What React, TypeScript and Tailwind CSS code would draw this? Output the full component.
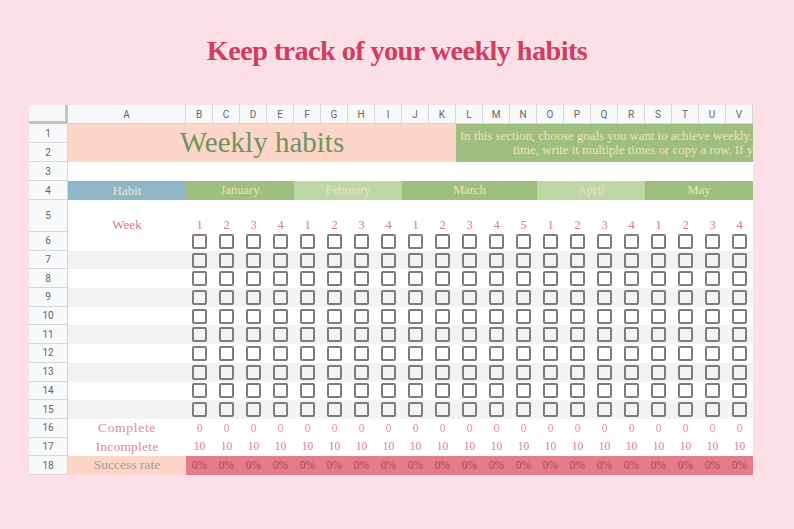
import React from "react";

/* ---------- Data ---------- */
const letters = "BCDEFGHIJKLMNOPQRSTUV".split("");

const months = [
  { name: "January", weeks: 4, dark: true },
  { name: "February", weeks: 4, dark: false },
  { name: "March", weeks: 5, dark: true },
  { name: "April", weeks: 4, dark: false },
  { name: "May", weeks: 4, dark: true },
];

const weekNums = months.flatMap((m) =>
  Array.from({ length: m.weeks }, (_, i) => i + 1)
);

const serif = "font-['Liberation_Serif','DejaVu_Serif',serif]";
const gutter =
  "flex items-center justify-center bg-[#f8f9fa] border-r border-b border-[#d4d6d9] text-[10px] text-[#666] font-['Roboto',sans-serif]";

function Gutter({ n }: { n: number }) {
  return <div className={gutter}>{n}</div>;
}

function Checkbox() {
  return (
    <div className="w-[15px] h-[15px] rounded-[2px] border-2 border-[#7c7c7c]" />
  );
}

export default function App() {
  return (
    <div className="w-[794px] h-[529px] bg-[#fde0e7] overflow-hidden flex flex-col">
      {/* Title */}
      <h1
        className={`self-center mt-[35px] h-[32px] leading-[32px] text-[28.3px] font-bold tracking-[-0.6px] text-[#d23c63] ${serif}`}
      >
        Keep track of your weekly habits
      </h1>

      {/* Sheet */}
      <div className="mt-[38px] ml-[29px] self-start grid grid-cols-[39px_118px_repeat(21,27px)] grid-rows-[19px_19px_19px_19px_19px_32px_repeat(13,18.7px)] bg-white">
        {/* Column headers */}
        <div className="bg-[#f8f9fa] border-r-[3px] border-b-[3px] border-[#c4c4c4]" />
        <div className="flex items-center justify-center bg-[#f8f9fa] border-r border-b border-[#d4d6d9] text-[10px] text-[#666] font-['Roboto',sans-serif]">
          A
        </div>
        {letters.map((l) => (
          <div
            key={l}
            className="flex items-center justify-center bg-[#f8f9fa] border-r border-b border-[#d4d6d9] text-[10px] text-[#666] font-['Roboto',sans-serif]"
          >
            {l}
          </div>
        ))}

        {/* Rows 1-2 */}
        <Gutter n={1} />
        <div
          className={`col-span-11 row-span-2 bg-[#fdd6c9] flex items-center justify-center text-[29px] text-[#6f9460] ${serif}`}
        >
          Weekly habits
        </div>
        <div
          className={`col-span-11 row-span-2 bg-[#9ebf7f] overflow-hidden whitespace-nowrap flex flex-col justify-center text-[12.8px] leading-[14px] text-[#f0e3b8] ${serif}`}
        >
          <div className="pl-[4px]">
            In this section, choose goals you want to achieve weekly.
          </div>
          <div className="pl-[57px]">
            time, write it multiple times or copy a row. If y
          </div>
        </div>
        <Gutter n={2} />

        {/* Row 3 */}
        <Gutter n={3} />
        <div className="col-span-22 bg-white" />

        {/* Row 4 */}
        <Gutter n={4} />
        <div
          className={`bg-[#8db7c7] flex items-center justify-center text-[13px] text-[#eee3d0] ${serif}`}
        >
          Habit
        </div>
        {months.map((m) => (
          <div
            key={m.name}
            className={`${m.dark ? "bg-[#9ebf7f]" : "bg-[#bdd7a6]"} ${
              m.weeks === 5 ? "col-span-5" : "col-span-4"
            } flex items-center justify-center text-[12.5px] text-[#f0e3b8] ${serif}`}
          >
            {m.name}
          </div>
        ))}

        {/* Row 5 */}
        <Gutter n={5} />
        <div
          className={`flex items-end justify-center text-[13px] leading-[14px] text-[#e0788c] ${serif}`}
        >
          Week
        </div>
        {weekNums.map((w, i) => (
          <div
            key={i}
            className={`flex items-end justify-center text-[12.5px] leading-[14px] text-[#e0788c] ${serif}`}
          >
            {w}
          </div>
        ))}

        {/* Rows 6-15 */}
        {Array.from({ length: 10 }).map((_, r) => {
          const bg = r % 2 === 1 ? "bg-[#f3f3f3]" : "bg-white";
          return (
            <React.Fragment key={r}>
              <Gutter n={r + 6} />
              <div className={bg} />
              {letters.map((l) => (
                <div key={l} className={`${bg} flex items-center justify-center`}>
                  <Checkbox />
                </div>
              ))}
            </React.Fragment>
          );
        })}

        {/* Row 16 */}
        <Gutter n={16} />
        <div
          className={`flex items-center justify-center text-[13.5px] tracking-[0.7px] text-[#e3889a] ${serif}`}
        >
          Complete
        </div>
        {letters.map((l) => (
          <div
            key={l}
            className={`flex items-center justify-center text-[11.5px] text-[#e88d9d] ${serif}`}
          >
            0
          </div>
        ))}

        {/* Row 17 */}
        <Gutter n={17} />
        <div
          className={`flex items-center justify-center text-[13.5px] tracking-[0.2px] text-[#e3889a] ${serif}`}
        >
          Incomplete
        </div>
        {letters.map((l) => (
          <div
            key={l}
            className={`flex items-center justify-center text-[11.5px] text-[#e0788c] ${serif}`}
          >
            10
          </div>
        ))}

        {/* Row 18 */}
        <Gutter n={18} />
        <div
          className={`bg-[#fdd6c9] flex items-center justify-center text-[13.5px] text-[#a89a98] ${serif}`}
        >
          Success rate
        </div>
        {letters.map((l) => (
          <div
            key={l}
            className={`bg-[#e57b8b] flex items-center justify-center text-[11.5px] text-[#b3475c] ${serif}`}
          >
            0%
          </div>
        ))}
      </div>
    </div>
  );
}
